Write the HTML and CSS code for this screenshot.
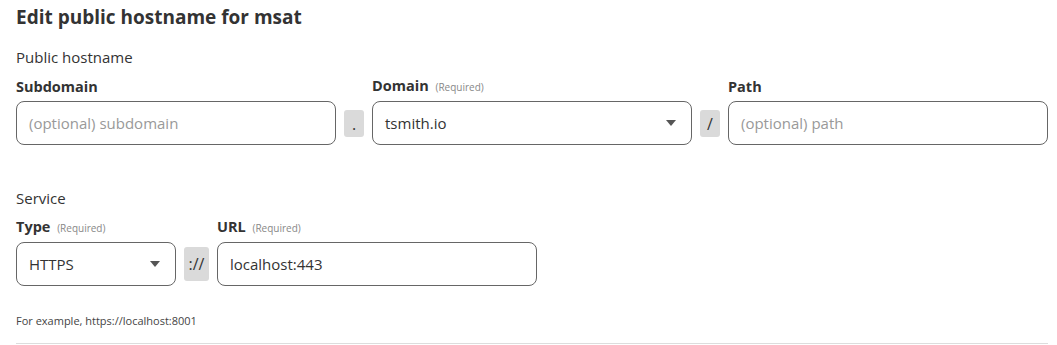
FILE: index.html
```html
<!DOCTYPE html>
<html lang="en">
<head>
  <meta charset="UTF-8">
  <title>Edit public hostname</title>
  <link rel="stylesheet" href="styles.css">
</head>
<body>
  <div class="form">
    <h2 class="title">Edit public hostname for msat</h2>

    <div class="section">Public hostname</div>
    <div class="row">
      <div class="field wide">
        <label class="label">Subdomain</label>
        <div class="input"><span class="placeholder">(optional) subdomain</span></div>
      </div>
      <span class="addon">.</span>
      <div class="field wide">
        <label class="label">Domain <small>(Required)</small></label>
        <div class="input select">tsmith.io <span class="caret"></span></div>
      </div>
      <span class="addon">/</span>
      <div class="field wide">
        <label class="label">Path</label>
        <div class="input"><span class="placeholder">(optional) path</span></div>
      </div>
    </div>

    <div class="section service">Service</div>
    <div class="row">
      <div class="field narrow">
        <label class="label">Type <small>(Required)</small></label>
        <div class="input select">HTTPS <span class="caret"></span></div>
      </div>
      <span class="addon scheme">://</span>
      <div class="field wide">
        <label class="label">URL <small>(Required)</small></label>
        <div class="input">localhost:443</div>
      </div>
    </div>

    <p class="hint">For example, https://localhost:8001</p>
    <hr class="divider">
  </div>
</body>
</html>
```

FILE: styles.css
```css
* {
  box-sizing: border-box;
}

body {
  margin: 0;
  background: #fff;
  color: #333;
  font-family: 'Open Sans', sans-serif;
}

.form {
  padding: 5px 9px 0 16px;
  width: 1057px;
}

.title {
  margin: 0;
  font-size: 19px;
  line-height: 24px;
  font-weight: 700;
}

.section {
  margin-top: 18px;
  font-size: 15px;
  line-height: 20px;
}

.section.service {
  margin-top: 43px;
}

.row {
  display: flex;
  align-items: flex-end;
  gap: 8px;
  margin-top: 9px;
}

.field {
  display: flex;
  flex-direction: column;
  gap: 4px;
}

.wide { width: 320px; }
.narrow { width: 160px; }

.label {
  font-size: 14.5px;
  line-height: 20px;
  font-weight: 700;
}

.label small {
  font-size: 10px;
  font-weight: 400;
  color: #888;
  margin-left: 3px;
}

.input {
  height: 44px;
  border: 1px solid #666;
  border-radius: 8px;
  padding: 0 13px 0 12px;
  display: flex;
  align-items: center;
  font-size: 15px;
  color: #333;
}

.placeholder { color: #999; }

.select {
  justify-content: space-between;
}

.caret {
  width: 0;
  height: 0;
  border-left: 5px solid transparent;
  border-right: 5px solid transparent;
  border-top: 6px solid #555;
  margin-right: 2px;
}

.addon {
  width: 20px;
  height: 27px;
  margin-bottom: 8px;
  background: #dadada;
  border-radius: 3px;
  font-size: 16px;
  display: flex;
  align-items: center;
  justify-content: center;
  color: #333;
}

.addon.scheme {
  width: 25px;
  height: 34px;
  margin-bottom: 5px;
}

.hint {
  margin: 28px 0 0;
  font-size: 11px;
  line-height: 14px;
  color: #444;
}

.divider {
  margin: 15px 0 0;
  width: 1032px;
  border: 0;
  border-top: 1px solid #ddd;
}
```
